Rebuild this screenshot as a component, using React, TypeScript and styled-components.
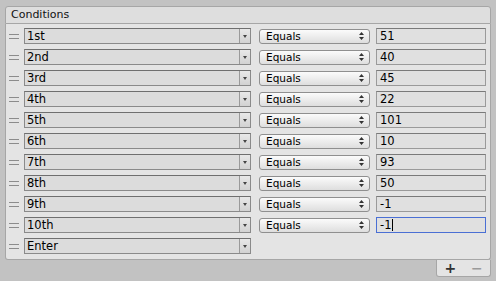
import React from 'react';
import styled, { createGlobalStyle } from 'styled-components';

const Global = createGlobalStyle`
  html, body {
    margin : 0;
    padding : 0;
    background : #c2c2c2;
    font-family : "DejaVu Sans", "Liberation Sans", sans-serif;
  }
`;

const Panel = styled.div`
  width : 486px;
  padding : 6px 5px 0 5px;
`;

const Header = styled.div`
  height : 16px;
  background : #dedede;
  border : 1px solid #a6a6a6;
  border-radius : 3px 3px 0 0;
  font-size : 11px;
  line-height : 16px;
  padding-left : 5px;
  color : #111;
`;

const Body = styled.div`
  background : #e4e4e4;
  border : 1px solid #a6a6a6;
  border-top : none;
  border-radius : 0 0 3px 3px;
  padding : 4px 4px 5px 2px;
  display : flex;
  flex-direction : column;
  gap : 5px;
`;

const Row = styled.div`
  display : flex;
  align-items : center;
  height : 16px;
`;

const Handle = styled.div`
  width : 10px;
  margin : 0 5px 0 1px;
  height : 5px;
  border-top : 1px solid #8c8c8c;
  border-bottom : 1px solid #8c8c8c;
  box-sizing : border-box;
`;

const Select = styled.div`
  width : 227px;
  height : 16px;
  box-sizing : border-box;
  display : flex;
  border : 1px solid #8a8a8a;
  border-top-color : #6f6f6f;
  background : #dcdcdc;
  margin-right : 8px;
`;

const SelectText = styled.div`
  flex : 1;
  font-size : 11.5px;
  line-height : 14px;
  padding-left : 2px;
  color : #000;
`;

const SelectArrow = styled.div`
  width : 10px;
  border-left : 1px solid #9a9a9a;
  background : linear-gradient(#e8e8e8, #d2d2d2);
  display : flex;
  align-items : center;
  justify-content : center;

  &::after {
    content : '';
    border-left : 2px solid transparent;
    border-right : 2px solid transparent;
    border-top : 3px solid #444;
  }
`;

const Popup = styled.div`
  width : 111px;
  height : 15px;
  box-sizing : border-box;
  border : 1px solid #8f8f8f;
  border-radius : 3px;
  background : linear-gradient(#fbfbfb, #dedede);
  display : flex;
  align-items : center;
  justify-content : space-between;
  padding : 0 5px 0 6px;
  font-size : 10.5px;
  color : #000;
  margin-right : 6px;
`;

const UpDown = styled.svg`
  width : 5px;
  height : 8px;
`;

const Field = styled.div<{ $focus?: boolean }>`
  width : 110px;
  height : 16px;
  box-sizing : border-box;
  border : 1px solid ${p => (p.$focus ? '#4a6fd4' : '#9a9a9a')};
  border-top-color : ${p => (p.$focus ? '#4a6fd4' : '#7a7a7a')};
  background : #e0e0e0;
  font-size : 11.5px;
  line-height : 14px;
  padding-left : 3px;
  color : #000;
  display : flex;
  align-items : center;
`;

const Caret = styled.span`
  width : 1px;
  height : 12px;
  background : #000;
  margin-left : 1px;
`;

const Footer = styled.div`
  display : flex;
  justify-content : flex-end;
`;

const Tab = styled.div`
  width : 53px;
  height : 16px;
  background : #e4e4e4;
  border : 1px solid #a6a6a6;
  border-top : none;
  border-radius : 0 0 3px 3px;
  display : flex;
  align-items : center;
  justify-content : space-around;
  font-size : 14px;
  font-weight : bold;
`;

const TabBtn = styled.span<{ $dim?: boolean }>`
  color : ${p => (p.$dim ? '#9a9a9a' : '#333')};
  line-height : 14px;
`;

const rows = [
  ['1st', '51'],
  ['2nd', '40'],
  ['3rd', '45'],
  ['4th', '22'],
  ['5th', '101'],
  ['6th', '10'],
  ['7th', '93'],
  ['8th', '50'],
  ['9th', '-1'],
  ['10th', '-1'],
];

export default function App() {
  return <>
    <Global />
    <Panel>
      <Header>Conditions</Header>
      <Body>
        {rows.map(([name, val], i) => (
          <Row key={name}>
            <Handle />
            <Select>
              <SelectText>{name}</SelectText>
              <SelectArrow />
            </Select>
            <Popup>
              <span>Equals</span>
              <UpDown viewBox="0 0 5 8">
                <path d="M2.5 0 L5 3 H0 Z M2.5 8 L5 5 H0 Z" fill="#333" />
              </UpDown>
            </Popup>
            <Field $focus={i === 9}>
              {val}
              {i === 9 && <Caret />}
            </Field>
          </Row>
        ))}
        <Row>
          <Handle />
          <Select>
            <SelectText>Enter</SelectText>
            <SelectArrow />
          </Select>
        </Row>
      </Body>
      <Footer>
        <Tab>
          <TabBtn>+</TabBtn>
          <TabBtn $dim>−</TabBtn>
        </Tab>
      </Footer>
    </Panel>
  </>;
}
